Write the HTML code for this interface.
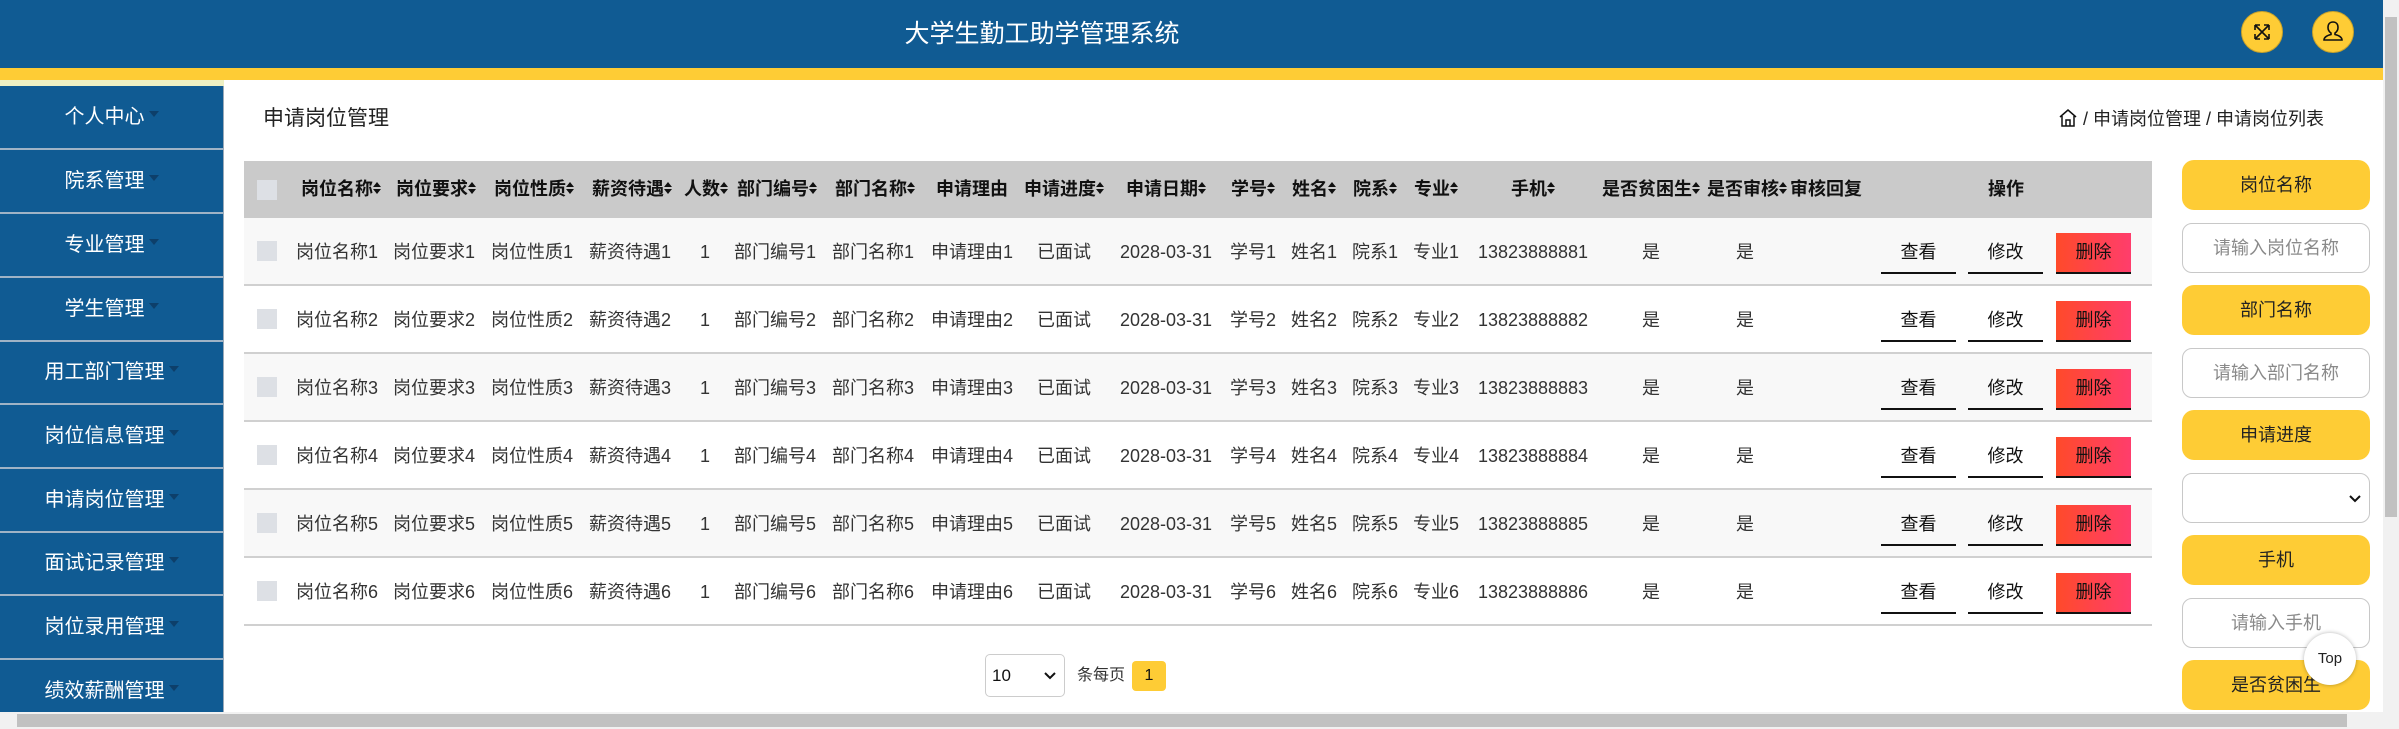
<!DOCTYPE html>
<html><head><meta charset="utf-8"><style>
*{margin:0;padding:0;box-sizing:border-box}
body{width:2399px;height:729px;overflow:hidden;position:relative;background:#fff;font-family:"Liberation Sans","Noto Sans CJK SC",sans-serif;color:#333}
.a{position:absolute}
#hd{left:0;top:0;width:2383px;height:68px;background:#105b93}
#yb{left:0;top:68px;width:2383px;height:12px;background:#fecc35}
#cr{left:0;top:80px;width:224px;height:6px;background:#eef0c4}
#ttl{left:0;width:2084px;top:0;height:68px;line-height:68px;text-align:center;color:#fff;font-size:25px}
.ci{width:42px;height:42px;border-radius:50%;background:#fecc35;top:11px;border:1px solid #c9a22a}
#sb{left:0;top:86px;width:224px;height:626px;background:#105b93;border-right:1px solid #9aa9b8}
.mi{position:absolute;left:0;width:223px;height:64px;line-height:62px;text-align:center;color:#fff;font-size:20px;border-bottom:2px solid #9fb3c6}
.mi i{display:inline-block;width:0;height:0;border-left:5px solid transparent;border-right:5px solid transparent;border-top:6px solid #0d3f6a;margin-left:4px;vertical-align:middle;position:relative;top:-4px}
.row{position:absolute;left:244px;width:1908px;height:68px;border-bottom:2px solid #d0d0d0}
.c{position:absolute;top:0;line-height:68px;transform:translateX(-50%);white-space:nowrap;font-size:18px;color:#333}
.hr .c{font-weight:bold;color:#111;line-height:57px}
.cb{position:absolute;left:13px;width:20px;height:20px;background:#dde0e5}
.s{display:inline-block;width:8px;height:12px;position:relative;vertical-align:middle;top:-2px}
.s:before,.s:after{content:"";position:absolute;left:0;border-left:4px solid transparent;border-right:4px solid transparent}
.s:before{top:0;border-bottom:5px solid #111}
.s:after{bottom:0;border-top:5px solid #111}
.b{position:absolute;top:15px;width:75px;height:41px;line-height:38px;text-align:center;font-size:18px;color:#111;border-bottom:2px solid #111}
.del{background:linear-gradient(90deg,#ff4a2a,#ff3d6c)}
.y{position:absolute;left:2182px;width:188px;height:50px;border-radius:12px;background:#fecc35;text-align:center;line-height:50px;font-size:18px;color:#222}
.in{position:absolute;left:2182px;width:188px;height:50px;border-radius:10px;border:1px solid #c8c8c8;background:#fff;text-align:center;line-height:48px;font-size:18px;color:#8a8a8a}
</style></head><body>
<div class="a" id="hd"></div><div class="a" id="yb"></div><div class="a" id="cr"></div>
<div class="a" id="ttl">大学生勤工助学管理系统</div>
<div class="a ci" style="left:2241px"><svg width="40" height="40" viewBox="0 0 40 40" style="position:absolute;left:0;top:0"><g stroke="#111" stroke-width="1.6" fill="none"><path d="M13 13L27 27M27 13L13 27M13 13h5M13 13v5M27 13h-5M27 13v5M13 27h5M13 27v-5M27 27h-5M27 27v-5"/></g></svg></div>
<div class="a ci" style="left:2312px"><svg width="40" height="40" viewBox="0 0 40 40" style="position:absolute;left:0;top:0"><g stroke="#111" stroke-width="1.6" fill="none"><path d="M20 10c-3.5 0-5 2.5-5 5.5 0 2.5 1.5 4.5 3 5.5v1.5c-4 1-7 3-7 5.5h18c0-2.5-3-4.5-7-5.5V21c1.5-1 3-3 3-5.5 0-3-1.5-5.5-5-5.5z"/></g></svg></div>

<div class="a" id="sb">
<div class="mi" style="top:0">个人中心<i></i></div>
<div class="mi" style="top:64px">院系管理<i></i></div>
<div class="mi" style="top:128px">专业管理<i></i></div>
<div class="mi" style="top:192px">学生管理<i></i></div>
<div class="mi" style="top:255px">用工部门管理<i></i></div>
<div class="mi" style="top:319px">岗位信息管理<i></i></div>
<div class="mi" style="top:383px">申请岗位管理<i></i></div>
<div class="mi" style="top:446px">面试记录管理<i></i></div>
<div class="mi" style="top:510px">岗位录用管理<i></i></div>
<div class="mi" style="top:574px;border-bottom:none">绩效薪酬管理<i></i></div>
</div>

<div class="a" style="left:263px;top:104px;font-size:21px;color:#222;line-height:30px">申请岗位管理</div>
<div class="a" style="left:2058px;top:104px;font-size:18px;color:#222;line-height:30px;white-space:nowrap"><svg width="20" height="20" viewBox="0 0 20 20" style="vertical-align:-3px"><path d="M2 9L10 2l8 7M4 8v10h12V8M8 18v-6h4v6" fill="none" stroke="#111" stroke-width="1.5"/></svg> / 申请岗位管理 / 申请岗位列表</div>

<div class="row hr" style="top:161px;height:57px;background:#cacaca;border:none">
<div class="cb" style="top:19px"></div>
<div class="c" style="left:97px">岗位名称<span class="s"></span></div>
<div class="c" style="left:192px">岗位要求<span class="s"></span></div>
<div class="c" style="left:290px">岗位性质<span class="s"></span></div>
<div class="c" style="left:388px">薪资待遇<span class="s"></span></div>
<div class="c" style="left:462px">人数<span class="s"></span></div>
<div class="c" style="left:533px">部门编号<span class="s"></span></div>
<div class="c" style="left:631px">部门名称<span class="s"></span></div>
<div class="c" style="left:728px">申请理由</div>
<div class="c" style="left:820px">申请进度<span class="s"></span></div>
<div class="c" style="left:922px">申请日期<span class="s"></span></div>
<div class="c" style="left:1009px">学号<span class="s"></span></div>
<div class="c" style="left:1070px">姓名<span class="s"></span></div>
<div class="c" style="left:1131px">院系<span class="s"></span></div>
<div class="c" style="left:1192px">专业<span class="s"></span></div>
<div class="c" style="left:1289px">手机<span class="s"></span></div>
<div class="c" style="left:1407px">是否贫困生<span class="s"></span></div>
<div class="c" style="left:1503px">是否审核<span class="s"></span></div>
<div class="c" style="left:1582px">审核回复</div>
<div class="c" style="left:1762px">操作</div>
</div>

<div class="row" style="top:218px;background:#f8f8f8"><div class="cb" style="top:23px"></div><div class="c" style="left:93px">岗位名称1</div><div class="c" style="left:190px">岗位要求1</div><div class="c" style="left:288px">岗位性质1</div><div class="c" style="left:386px">薪资待遇1</div><div class="c" style="left:461px">1</div><div class="c" style="left:531px">部门编号1</div><div class="c" style="left:629px">部门名称1</div><div class="c" style="left:728px">申请理由1</div><div class="c" style="left:820px">已面试</div><div class="c" style="left:922px">2028-03-31</div><div class="c" style="left:1009px">学号1</div><div class="c" style="left:1070px">姓名1</div><div class="c" style="left:1131px">院系1</div><div class="c" style="left:1192px">专业1</div><div class="c" style="left:1289px">13823888881</div><div class="c" style="left:1407px">是</div><div class="c" style="left:1501px">是</div><div class="b" style="left:1637px">查看</div><div class="b" style="left:1724px">修改</div><div class="b del" style="left:1812px">删除</div></div>
<div class="row" style="top:286px;background:#fff"><div class="cb" style="top:23px"></div><div class="c" style="left:93px">岗位名称2</div><div class="c" style="left:190px">岗位要求2</div><div class="c" style="left:288px">岗位性质2</div><div class="c" style="left:386px">薪资待遇2</div><div class="c" style="left:461px">1</div><div class="c" style="left:531px">部门编号2</div><div class="c" style="left:629px">部门名称2</div><div class="c" style="left:728px">申请理由2</div><div class="c" style="left:820px">已面试</div><div class="c" style="left:922px">2028-03-31</div><div class="c" style="left:1009px">学号2</div><div class="c" style="left:1070px">姓名2</div><div class="c" style="left:1131px">院系2</div><div class="c" style="left:1192px">专业2</div><div class="c" style="left:1289px">13823888882</div><div class="c" style="left:1407px">是</div><div class="c" style="left:1501px">是</div><div class="b" style="left:1637px">查看</div><div class="b" style="left:1724px">修改</div><div class="b del" style="left:1812px">删除</div></div>
<div class="row" style="top:354px;background:#f8f8f8"><div class="cb" style="top:23px"></div><div class="c" style="left:93px">岗位名称3</div><div class="c" style="left:190px">岗位要求3</div><div class="c" style="left:288px">岗位性质3</div><div class="c" style="left:386px">薪资待遇3</div><div class="c" style="left:461px">1</div><div class="c" style="left:531px">部门编号3</div><div class="c" style="left:629px">部门名称3</div><div class="c" style="left:728px">申请理由3</div><div class="c" style="left:820px">已面试</div><div class="c" style="left:922px">2028-03-31</div><div class="c" style="left:1009px">学号3</div><div class="c" style="left:1070px">姓名3</div><div class="c" style="left:1131px">院系3</div><div class="c" style="left:1192px">专业3</div><div class="c" style="left:1289px">13823888883</div><div class="c" style="left:1407px">是</div><div class="c" style="left:1501px">是</div><div class="b" style="left:1637px">查看</div><div class="b" style="left:1724px">修改</div><div class="b del" style="left:1812px">删除</div></div>
<div class="row" style="top:422px;background:#fff"><div class="cb" style="top:23px"></div><div class="c" style="left:93px">岗位名称4</div><div class="c" style="left:190px">岗位要求4</div><div class="c" style="left:288px">岗位性质4</div><div class="c" style="left:386px">薪资待遇4</div><div class="c" style="left:461px">1</div><div class="c" style="left:531px">部门编号4</div><div class="c" style="left:629px">部门名称4</div><div class="c" style="left:728px">申请理由4</div><div class="c" style="left:820px">已面试</div><div class="c" style="left:922px">2028-03-31</div><div class="c" style="left:1009px">学号4</div><div class="c" style="left:1070px">姓名4</div><div class="c" style="left:1131px">院系4</div><div class="c" style="left:1192px">专业4</div><div class="c" style="left:1289px">13823888884</div><div class="c" style="left:1407px">是</div><div class="c" style="left:1501px">是</div><div class="b" style="left:1637px">查看</div><div class="b" style="left:1724px">修改</div><div class="b del" style="left:1812px">删除</div></div>
<div class="row" style="top:490px;background:#f8f8f8"><div class="cb" style="top:23px"></div><div class="c" style="left:93px">岗位名称5</div><div class="c" style="left:190px">岗位要求5</div><div class="c" style="left:288px">岗位性质5</div><div class="c" style="left:386px">薪资待遇5</div><div class="c" style="left:461px">1</div><div class="c" style="left:531px">部门编号5</div><div class="c" style="left:629px">部门名称5</div><div class="c" style="left:728px">申请理由5</div><div class="c" style="left:820px">已面试</div><div class="c" style="left:922px">2028-03-31</div><div class="c" style="left:1009px">学号5</div><div class="c" style="left:1070px">姓名5</div><div class="c" style="left:1131px">院系5</div><div class="c" style="left:1192px">专业5</div><div class="c" style="left:1289px">13823888885</div><div class="c" style="left:1407px">是</div><div class="c" style="left:1501px">是</div><div class="b" style="left:1637px">查看</div><div class="b" style="left:1724px">修改</div><div class="b del" style="left:1812px">删除</div></div>
<div class="row" style="top:558px;background:#fff"><div class="cb" style="top:23px"></div><div class="c" style="left:93px">岗位名称6</div><div class="c" style="left:190px">岗位要求6</div><div class="c" style="left:288px">岗位性质6</div><div class="c" style="left:386px">薪资待遇6</div><div class="c" style="left:461px">1</div><div class="c" style="left:531px">部门编号6</div><div class="c" style="left:629px">部门名称6</div><div class="c" style="left:728px">申请理由6</div><div class="c" style="left:820px">已面试</div><div class="c" style="left:922px">2028-03-31</div><div class="c" style="left:1009px">学号6</div><div class="c" style="left:1070px">姓名6</div><div class="c" style="left:1131px">院系6</div><div class="c" style="left:1192px">专业6</div><div class="c" style="left:1289px">13823888886</div><div class="c" style="left:1407px">是</div><div class="c" style="left:1501px">是</div><div class="b" style="left:1637px">查看</div><div class="b" style="left:1724px">修改</div><div class="b del" style="left:1812px">删除</div></div>

<div class="a" style="left:985px;top:654px;width:80px;height:43px;border:1px solid #ccc;border-radius:5px;font-size:17px;line-height:41px;padding-left:6px;color:#111">10<svg width="12" height="8" viewBox="0 0 12 8" style="position:absolute;right:8px;top:17px"><path d="M1 1l5 5 5-5" fill="none" stroke="#111" stroke-width="2"/></svg></div>
<div class="a" style="left:1077px;top:662px;font-size:16px;line-height:28px;color:#333">条每页</div>
<div class="a" style="left:1132px;top:661px;width:34px;height:30px;border-radius:4px;background:#fecc35;text-align:center;line-height:30px;font-size:16px;color:#111">1</div>

<div class="y" style="top:160px">岗位名称</div>
<div class="in" style="top:223px">请输入岗位名称</div>
<div class="y" style="top:285px">部门名称</div>
<div class="in" style="top:348px">请输入部门名称</div>
<div class="y" style="top:410px">申请进度</div>
<div class="in" style="top:473px"><svg width="12" height="8" viewBox="0 0 12 8" style="position:absolute;right:8px;top:21px"><path d="M1 1l5 5 5-5" fill="none" stroke="#111" stroke-width="2"/></svg></div>
<div class="y" style="top:535px">手机</div>
<div class="in" style="top:598px">请输入手机</div>
<div class="y" style="top:660px">是否贫困生</div>
<div class="a" style="left:2304px;top:633px;width:52px;height:52px;border-radius:50%;background:#fff;box-shadow:0 0 4px rgba(0,0,0,.3);text-align:center;line-height:52px;font-size:15px;color:#222">Top</div>

<div class="a" style="left:2383px;top:0;width:16px;height:729px;background:#f1f1f1"></div>
<div class="a" style="left:2385px;top:17px;width:12px;height:500px;background:#c1c1c1"></div>
<div class="a" style="left:0;top:712px;width:2383px;height:17px;background:#f1f1f1"></div>
<div class="a" style="left:17px;top:714px;width:2330px;height:13px;background:#c1c1c1"></div>
</body></html>
